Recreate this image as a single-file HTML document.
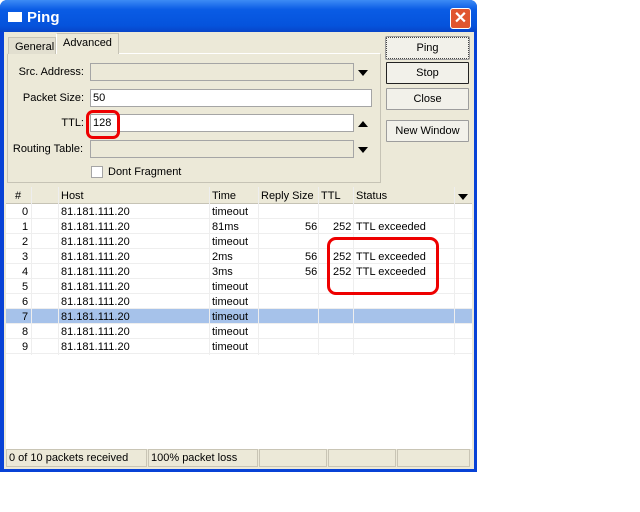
<!DOCTYPE html><html><head><style>
*{margin:0;padding:0;box-sizing:border-box}
body{width:640px;height:512px;background:#fff;position:relative;overflow:hidden;font-family:"Liberation Sans",sans-serif;font-size:11px;color:#000}
.a{position:absolute}
.win{left:0;top:0;width:477px;height:472px;background:#0842d6;border-radius:7px 7px 0 0}
.title{left:0;top:0;width:477px;height:32px;border-radius:7px 7px 0 0;background:linear-gradient(#3d8cf5,#0a5ce5 30%,#0553dc 80%,#0845c8)}
.body{left:4px;top:32px;width:470px;height:437px;background:#ece9d8}
.fld{position:absolute;height:18px;border:1px solid #a5a5a5;background:#ece9d8}
.w{background:#fff}
.lbl{position:absolute;text-align:right;width:84px;left:0}
.btn{position:absolute;left:386px;width:83px;height:22px;border:1px solid #9d9d9d;background:#f2f1ea;text-align:center;line-height:20px;border-radius:1px}
.tri{position:absolute;width:0;height:0;border-left:5px solid transparent;border-right:5px solid transparent}
.row{position:absolute;left:6px;width:466px;height:15px;border-bottom:1px solid #eee;font-size:11px}
.row span{position:absolute;top:2px}
.cl{position:absolute;top:187px;height:262px;width:1px;background:#eee}
.sb{position:absolute;top:449px;height:18px;border:1px solid #c9c5b5;background:#ece9d8;padding:2px 2px;font-size:11px}
</style></head><body>
<div class="a win"></div>
<div class="a title"></div>
<div class="a" style="left:8px;top:12px;width:14px;height:10px;background:#fff"></div>
<div class="a" style="left:27px;top:9px;color:#fff;font-weight:bold;font-size:15px">Ping</div>
<div class="a" style="left:450px;top:8px;width:21px;height:21px;background:#e0552f;border:1px solid #fff;border-radius:3px;color:#fff;text-align:center;font-size:16px;line-height:19px;font-weight:bold">✕</div>
<div class="a body"></div>
<div class="a" style="left:7px;top:53px;width:374px;height:130px;border:1px solid #c6c3b5;background:#ece9d8;border-top-color:#fff"></div>
<div class="a" style="left:8px;top:37px;width:48px;height:17px;border:1px solid #c6c3b5;border-bottom:none;background:#e2dfd0;padding:3px 0 0 6px">General</div>
<div class="a" style="left:56px;top:33px;width:63px;height:21px;border:1px solid #c6c3b5;border-left-color:#fff;border-bottom:none;background:#ece9d8;padding:3px 0 0 6px">Advanced</div>
<div class="lbl" style="top:66px">Src. Address:</div>
<div class="fld" style="left:90px;top:63px;width:264px"></div>
<div class="tri" style="left:358px;top:70px;border-top:6px solid #000"></div>
<div class="lbl" style="top:92px">Packet Size:</div>
<div class="fld w" style="left:90px;top:89px;width:282px;padding:2px 2px">50</div>
<div class="lbl" style="top:117px">TTL:</div>
<div class="fld w" style="left:90px;top:114px;width:264px;padding:2px 2px">128</div>
<div class="tri" style="left:358px;top:121px;border-bottom:6px solid #000"></div>
<div class="lbl" style="top:143px;left:-1px">Routing Table:</div>
<div class="fld" style="left:90px;top:140px;width:264px"></div>
<div class="tri" style="left:358px;top:147px;border-top:6px solid #000"></div>
<div class="a" style="left:91px;top:166px;width:12px;height:12px;border:1px solid #a5a5a5;background:#fff"></div>
<div class="a" style="left:108px;top:166px">Dont Fragment</div>
<div class="btn" style="top:37px;border:1px dotted #444;outline:1px solid #9d9d9d">Ping</div>
<div class="btn" style="top:62px;border-color:#222">Stop</div>
<div class="btn" style="top:88px">Close</div>
<div class="btn" style="top:120px">New Window</div>
<div class="a" style="left:6px;top:187px;width:466px;height:262px;background:#fff"></div>
<div class="a" style="left:6px;top:187px;width:466px;height:17px;background:#ece9d8;border-bottom:1px solid #c6c3b5"></div>
<div class="a" style="left:6px;top:309px;width:466px;height:15px;background:#a6c2ea"></div>
<div class="cl" style="left:31px"></div><div class="cl" style="left:58px"></div><div class="cl" style="left:209px"></div><div class="cl" style="left:258px"></div><div class="cl" style="left:318px"></div><div class="cl" style="left:353px"></div><div class="cl" style="left:454px"></div>
<div class="row" style="top:188px;border:none"><span style="left:9px">#</span><span style="left:55px">Host</span><span style="left:206px">Time</span><span style="left:255px">Reply Size</span><span style="left:315px">TTL</span><span style="left:350px">Status</span></div>
<div class="tri" style="left:458px;top:194px;border-top:6px solid #000"></div>
<div class="row" style="top:204px"><span style="left:16px">0</span><span style="left:55px">81.181.111.20</span><span style="left:206px">timeout</span></div>
<div class="row" style="top:219px"><span style="left:16px">1</span><span style="left:55px">81.181.111.20</span><span style="left:206px">81ms</span><span style="left:299px">56</span><span style="left:327px">252</span><span style="left:350px">TTL exceeded</span></div>
<div class="row" style="top:234px"><span style="left:16px">2</span><span style="left:55px">81.181.111.20</span><span style="left:206px">timeout</span></div>
<div class="row" style="top:249px"><span style="left:16px">3</span><span style="left:55px">81.181.111.20</span><span style="left:206px">2ms</span><span style="left:299px">56</span><span style="left:327px">252</span><span style="left:350px">TTL exceeded</span></div>
<div class="row" style="top:264px"><span style="left:16px">4</span><span style="left:55px">81.181.111.20</span><span style="left:206px">3ms</span><span style="left:299px">56</span><span style="left:327px">252</span><span style="left:350px">TTL exceeded</span></div>
<div class="row" style="top:279px"><span style="left:16px">5</span><span style="left:55px">81.181.111.20</span><span style="left:206px">timeout</span></div>
<div class="row" style="top:294px"><span style="left:16px">6</span><span style="left:55px">81.181.111.20</span><span style="left:206px">timeout</span></div>
<div class="row" style="top:309px"><span style="left:16px">7</span><span style="left:55px">81.181.111.20</span><span style="left:206px">timeout</span></div>
<div class="row" style="top:324px"><span style="left:16px">8</span><span style="left:55px">81.181.111.20</span><span style="left:206px">timeout</span></div>
<div class="row" style="top:339px"><span style="left:16px">9</span><span style="left:55px">81.181.111.20</span><span style="left:206px">timeout</span></div>
<div class="a" style="left:6px;top:355px;width:466px;height:94px;background:#fff"></div>
<div class="sb" style="left:6px;width:141px">0 of 10 packets received</div>
<div class="sb" style="left:148px;width:110px">100% packet loss</div>
<div class="sb" style="left:259px;width:68px"></div>
<div class="sb" style="left:328px;width:68px"></div>
<div class="sb" style="left:397px;width:73px"></div>
<div class="a" style="left:86px;top:110px;width:34px;height:29px;border:3px solid #e00;border-radius:7px"></div>
<div class="a" style="left:327px;top:237px;width:112px;height:58px;border:3px solid #e00;border-radius:9px"></div>
</body></html>
